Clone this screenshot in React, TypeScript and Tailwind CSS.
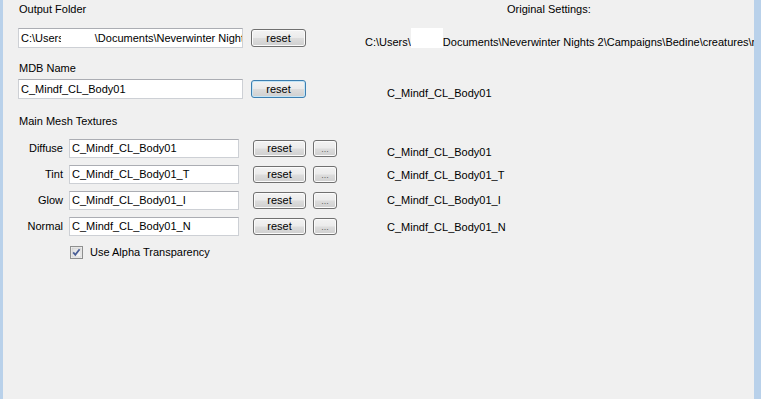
import type { ReactNode } from "react";

const textures = [
  { label: "Diffuse", value: "C_Mindf_CL_Body01", pad: "pt-[7px]" },
  { label: "Tint", value: "C_Mindf_CL_Body01_T", pad: "pt-[4px]" },
  { label: "Glow", value: "C_Mindf_CL_Body01_I", pad: "pt-[3px]" },
  { label: "Normal", value: "C_Mindf_CL_Body01_N", pad: "pt-[4px]" },
];

function TextBox({ className, children }: { className: string; children: ReactNode }) {
  return (
    <div
      className={`flex items-center overflow-hidden whitespace-nowrap border border-[#cdd0d5] border-t-[#abadb3] bg-white pl-[2px] ${className}`}
    >
      {children}
    </div>
  );
}

function Btn({ className, focused, children }: { className: string; focused?: boolean; children: ReactNode }) {
  return (
    <div
      className={`flex shrink-0 items-center justify-center rounded-[3px] border bg-[linear-gradient(#f3f3f3_0%,#ebebeb_48%,#dddddd_52%,#cfcfcf_100%)] ${
        focused
          ? "border-[#3c7fb1] shadow-[inset_0_0_0_1px_#c4e5f6]"
          : "border-[#707070] shadow-[inset_0_0_0_1px_#fbfbfb]"
      } ${className}`}
    >
      {children}
    </div>
  );
}

function Row({ left, right }: { left: ReactNode; right?: ReactNode }) {
  return (
    <div className="flex">
      <div className="w-[361px] shrink-0">{left}</div>
      <div className="min-w-0 flex-1 overflow-hidden whitespace-nowrap">{right}</div>
    </div>
  );
}

export default function App() {
  return (
    <div className="flex h-[399px] w-[761px] bg-[#b9d1ea] font-['Liberation_Sans',Arial,sans-serif] text-[11px] leading-[13px] text-black">
      <div className="ml-[3px] h-full w-[751px] overflow-hidden bg-[#f0f0f0]">
        {/* Output folder */}
        <Row
          left={<div className="h-[28px] pl-[16px] pt-[3px]">Output Folder</div>}
          right={<div className="h-[28px] pl-[143px] pt-[3px]">Original Settings:</div>}
        />
        <Row
          left={
            <div className="flex h-[20px] items-center pl-[15px]">
              <TextBox className="h-[20px] w-[225px]">
                <span>C:\Users</span>
                <span className="-ml-[3px] inline-block h-[15px] w-[34px] shrink-0 bg-white" />
                <span>\Documents\Neverwinter Night</span>
              </TextBox>
              <Btn className="ml-[8px] h-[18px] w-[55px]">reset</Btn>
            </div>
          }
          right={
            <div className="h-[20px] pl-[1px] pt-[8px]">
              C:\Users\
              <span className="relative -top-[3px] -my-[7px] inline-block h-[27px] w-[32px] bg-white align-middle" />
              Documents\Neverwinter Nights 2\Campaigns\Bedine\creatures\re
            </div>
          }
        />

        {/* MDB name */}
        <Row left={<div className="h-[31px] pl-[16px] pt-[14px]">MDB Name</div>} />
        <Row
          left={
            <div className="flex h-[20px] items-center pl-[15px]">
              <TextBox className="h-[20px] w-[225px]">C_Mindf_CL_Body01</TextBox>
              <Btn focused className="ml-[8px] h-[18px] w-[55px]">
                reset
              </Btn>
            </div>
          }
          right={<div className="h-[20px] pl-[23px] pt-[8px]">C_Mindf_CL_Body01</div>}
        />

        {/* Textures */}
        <Row left={<div className="h-[40px] pl-[16px] pt-[16px]">Main Mesh Textures</div>} />
        <div className="flex flex-col gap-[7px]">
          {textures.map((t) => (
            <Row
              key={t.label}
              left={
                <div className="flex h-[19px] items-center">
                  <div className="w-[60px] text-right">{t.label}</div>
                  <TextBox className="ml-[6px] h-[19px] w-[170px]">{t.value}</TextBox>
                  <Btn className="ml-[14px] h-[17px] w-[53px]">reset</Btn>
                  <Btn className="ml-[7px] h-[17px] w-[24px] items-end pb-[2px] text-[9px] leading-[9px] text-[#666]">
                    ...
                  </Btn>
                </div>
              }
              right={<div className={`h-[19px] pl-[23px] ${t.pad}`}>{t.value}</div>}
            />
          ))}
        </div>

        {/* Checkbox */}
        <div className="mt-[10px] flex items-center pl-[67px]">
          <svg width="13" height="13" viewBox="0 0 13 13" className="shrink-0">
            <defs>
              <linearGradient id="cb" x1="0" y1="0" x2="1" y2="1">
                <stop offset="0" stopColor="#dcdcdc" />
                <stop offset="1" stopColor="#fbfbfb" />
              </linearGradient>
            </defs>
            <rect x="0.5" y="0.5" width="12" height="12" fill="#f4f4f4" stroke="#8e8f8f" />
            <rect x="2" y="2" width="9" height="9" fill="url(#cb)" stroke="#c6c6c6" strokeWidth="0.6" />
            <path d="M3.2 6.4 L5.3 8.8 L9.6 3.3" fill="none" stroke="#4a5f97" strokeWidth="1.8" />
          </svg>
          <span className="ml-[7px]">Use Alpha Transparency</span>
        </div>
      </div>
    </div>
  );
}
